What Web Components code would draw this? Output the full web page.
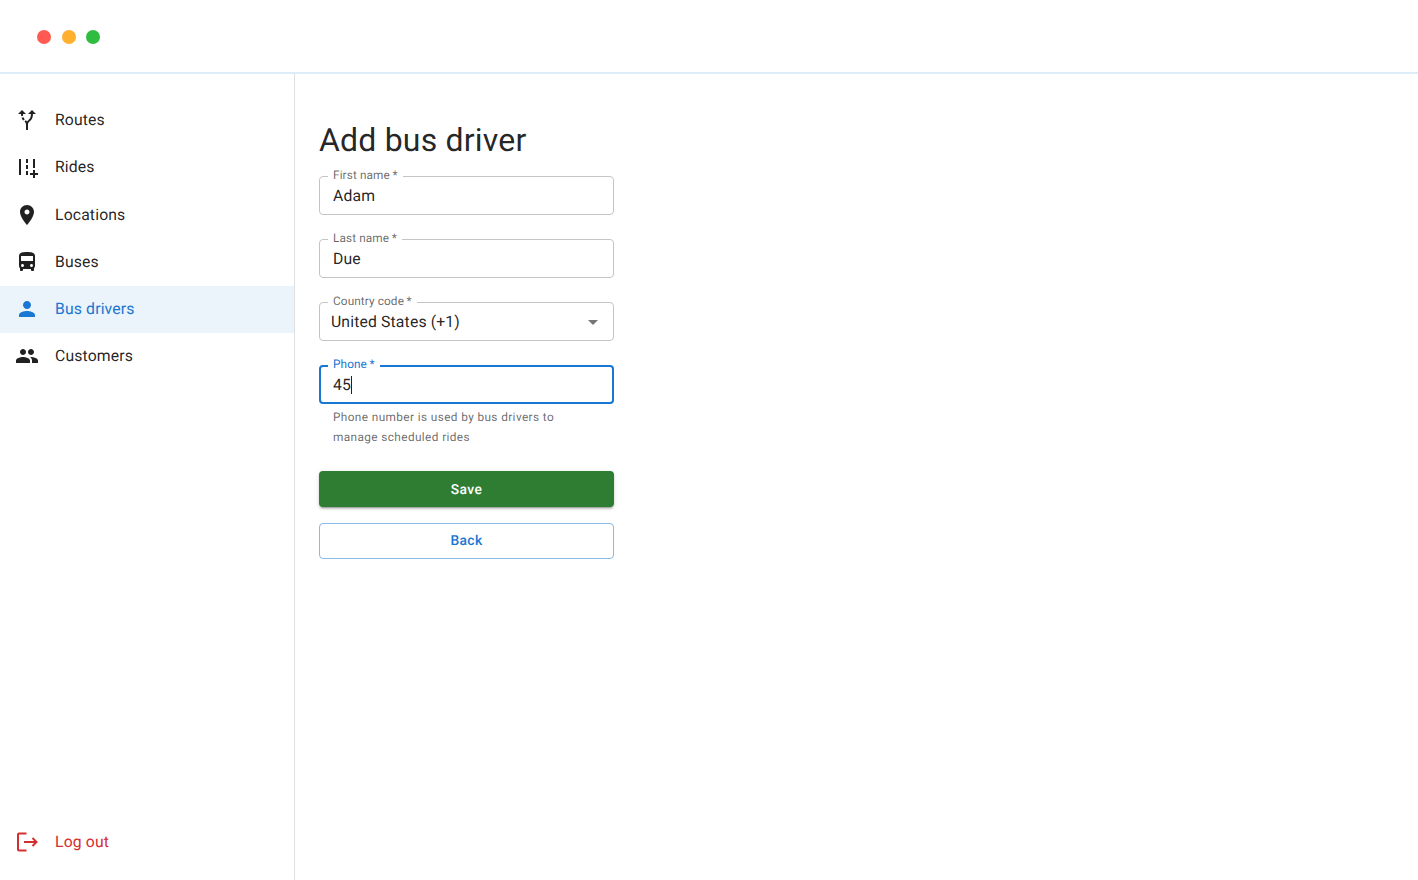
<!DOCTYPE html>
<html lang="en">
<head>
<meta charset="utf-8">
<title>Add bus driver</title>
<style>
  html, body { margin: 0; height: 100%; background: #fff; }
  body { font-family: Roboto, "Liberation Sans", sans-serif; color: rgba(0, 0, 0, 0.87); overflow: hidden; text-rendering: geometricPrecision; }
</style>
</head>
<body>
<app-shell>
  <title-bar slot="top"></title-bar>
  <side-nav slot="side">
    <nav-item icon="route">Routes</nav-item>
    <nav-item icon="road">Rides</nav-item>
    <nav-item icon="place">Locations</nav-item>
    <nav-item icon="bus">Buses</nav-item>
    <nav-item icon="person" selected>Bus drivers</nav-item>
    <nav-item icon="people">Customers</nav-item>
    <nav-item icon="logout" slot="bottom" danger>Log out</nav-item>
  </side-nav>
  <driver-form>
    <text-field label="First name&thinsp;*">Adam</text-field>
    <text-field label="Last name&thinsp;*">Due</text-field>
    <text-field label="Country code&thinsp;*" select>United States (+1)</text-field>
    <text-field label="Phone&thinsp;*" focused>45<span slot="helper">Phone number is used by bus drivers to manage scheduled rides</span></text-field>
    <form-button slot="actions" variant="contained">Save</form-button>
    <form-button slot="actions" variant="outlined">Back</form-button>
  </driver-form>
</app-shell>

<script>
// Material icon paths used by the side navigation
const ICONS = {
  route: '<path d="M9.78 11.16l-1.42 1.42c-.68-.69-1.34-1.58-1.79-2.94l1.94-.49c.32.89.77 1.5 1.27 2.01zM11 6 7 2 3 6h3.02c.02.81.08 1.54.19 2.17l1.94-.49C8.08 7.2 8.03 6.63 8.02 6H11zm10 0-4-4-4 4h2.99c-.1 3.68-1.28 4.75-2.54 5.88-.5.44-1.01.92-1.45 1.55-.34-.49-.73-.88-1.13-1.24L9.46 13.6c.93.85 1.54 1.54 1.54 3.4v5h2v-5c0-2.02.71-2.66 1.79-3.63 1.38-1.24 3.08-2.78 3.2-7.37H21z"/>',
  road: '<path d="M20 18v-3h-2v3h-3v2h3v3h2v-3h3v-2zM18 4h2v9h-2zM4 4h2v16H4zm7 0h2v4h-2zm0 6h2v4h-2zm0 6h2v4h-2z"/>',
  place: '<path d="M12 2C8.13 2 5 5.13 5 9c0 5.25 7 13 7 13s7-7.75 7-13c0-3.87-3.13-7-7-7zm0 9.5c-1.38 0-2.5-1.12-2.5-2.5s1.12-2.5 2.5-2.5 2.5 1.12 2.5 2.5-1.12 2.5-2.5 2.5z"/>',
  bus: '<path d="M4 16c0 .88.39 1.67 1 2.22V20c0 .55.45 1 1 1h1c.55 0 1-.45 1-1v-1h8v1c0 .55.45 1 1 1h1c.55 0 1-.45 1-1v-1.78c.61-.55 1-1.34 1-2.22V6c0-3.5-3.58-4-8-4s-8 .5-8 4v10zm3.5 1c-.83 0-1.5-.67-1.5-1.5S6.67 14 7.5 14s1.5.67 1.5 1.5S8.33 17 7.5 17zm9 0c-.83 0-1.5-.67-1.5-1.5s.67-1.5 1.5-1.5 1.5.67 1.5 1.5-.67 1.5-1.5 1.5zm1.5-6H6V6h12v5z"/>',
  person: '<path d="M12 12c2.21 0 4-1.79 4-4s-1.79-4-4-4-4 1.79-4 4 1.79 4 4 4zm0 2c-2.67 0-8 1.34-8 4v2h16v-2c0-2.66-5.33-4-8-4z"/>',
  people: '<path d="M16 11c1.66 0 2.99-1.34 2.99-3S17.66 5 16 5c-1.66 0-3 1.34-3 3s1.34 3 3 3zm-8 0c1.66 0 2.99-1.34 2.99-3S9.66 5 8 5C6.34 5 5 6.34 5 8s1.34 3 3 3zm0 2c-2.33 0-7 1.17-7 3.5V19h14v-2.5c0-2.33-4.67-3.5-7-3.5zm8 0c-.29 0-.62.02-.97.05 1.16.84 1.97 1.97 1.97 3.45V19h6v-2.5c0-2.33-4.67-3.5-7-3.5z"/>',
  logout: '<path d="M11.5 3.5H4a1 1 0 0 0-1 1v15a1 1 0 0 0 1 1h7.5M9 12h12M17.5 8l4 4-4 4" fill="none" stroke="currentColor" stroke-width="2"/>'
};

class AppShell extends HTMLElement {
  constructor() {
    super();
    this.attachShadow({ mode: "open" });
    this.shadowRoot.innerHTML = `<style>
        :host { display: grid; grid-template-rows: auto 1fr; grid-template-columns: 295px 1fr; height: 100vh; }
        .top { grid-column: 1 / 3; }
      </style>
      <div class="top"><slot name="top"></slot></div>
      <slot name="side"></slot>
      <main><slot></slot></main>`;
  }
}

class TitleBar extends HTMLElement {
  constructor() {
    super();
    this.attachShadow({ mode: "open" });
    this.shadowRoot.innerHTML = `<style>
        :host { display: flex; align-items: center; gap: 10.5px; height: 70px; padding: 2px 0 0 37px; border-bottom: 2px solid #deebf8; box-sizing: content-box; }
        span { width: 14px; height: 14px; border-radius: 50%; }
      </style>
      <span style="background:#ff5a52"></span>
      <span style="background:#ffb02e"></span>
      <span style="background:#2fbd40"></span>`;
  }
}

class SideNav extends HTMLElement {
  constructor() {
    super();
    this.attachShadow({ mode: "open" });
    this.shadowRoot.innerHTML = `<style>
        :host { display: flex; flex-direction: column; justify-content: space-between; padding: 22.5px 0 14px; border-right: 1px solid #e0e0e0; box-sizing: border-box; min-height: 0; }
      </style>
      <div><slot></slot></div>
      <div><slot name="bottom"></slot></div>`;
  }
}

class NavItem extends HTMLElement {
  constructor() {
    super();
    this.attachShadow({ mode: "open" });
    this.shadowRoot.innerHTML = `<style>
        :host { display: flex; align-items: center; gap: 16px; height: 47.25px; padding-left: 15px; font-size: 15.76px; letter-spacing: 0.148px; color: rgba(0, 0, 0, 0.87); }
        :host([selected]) { background: #ebf3fb; color: #1976d2; }
        :host([danger]) { color: #d32f2f; }
        svg { width: 24px; height: 24px; fill: currentColor; flex: none; }
        span { margin-bottom: 1px; }
      </style>
      <svg viewBox="0 0 24 24">${ICONS[this.getAttribute("icon")]}</svg>
      <span><slot></slot></span>`;
  }
}

class DriverForm extends HTMLElement {
  constructor() {
    super();
    this.attachShadow({ mode: "open" });
    this.shadowRoot.innerHTML = `<style>
        :host { display: block; width: 295px; padding: 46px 0 0 24px; }
        h1 { margin: 0 0 16px; font-size: 32px; font-weight: 400; line-height: 40px; letter-spacing: 0.2px; }
        .fields, .actions { display: flex; flex-direction: column; }
        .fields { gap: 24px; }
        .actions { gap: 16px; margin-top: 24px; }
      </style>
      <h1>Add bus driver</h1>
      <div class="fields"><slot></slot></div>
      <div class="actions"><slot name="actions"></slot></div>`;
  }
}

class TextField extends HTMLElement {
  constructor() {
    super();
    this.attachShadow({ mode: "open" });
    const caret = this.hasAttribute("focused") ? '<i class="caret"></i>' : "";
    const arrow = this.hasAttribute("select")
      ? '<svg viewBox="0 0 24 24"><path d="M7 10l5 5 5-5z"/></svg>'
      : "";
    this.shadowRoot.innerHTML = `<style>
        :host { display: block; }
        .box { position: relative; display: flex; align-items: center; justify-content: space-between; height: 39px; padding: 0 14px; box-sizing: border-box; font-size: 15.76px; letter-spacing: 0.148px; }
        :host([select]) .box { padding: 0 9px 0 12px; }
        fieldset { position: absolute; inset: -5px 0 0; margin: 0; padding: 0 8px; border: 1px solid #c4c4c4; border-radius: 4px; pointer-events: none; }
        legend { padding: 0 5.5px 0 5px; height: 11px; font-size: 11.82px; line-height: 9px; letter-spacing: 0.1px; color: rgba(0, 0, 0, 0.6); white-space: nowrap; }
        :host([focused]) fieldset { border: 2px solid #1976d2; padding: 0 7px; }
        :host([focused]) legend { color: #1976d2; }
        .value { display: flex; align-items: center; }
        .caret { width: 1px; height: 18px; background: #222; }
        svg { width: 24px; height: 24px; fill: rgba(0, 0, 0, 0.54); }
        .helper { margin: 2.5px 14px 0; padding-bottom: 0.5px; font-size: 11.82px; line-height: 20px; letter-spacing: 0.39px; color: rgba(0, 0, 0, 0.6); }
      </style>
      <div class="box">
        <fieldset><legend>${this.getAttribute("label")}</legend></fieldset>
        <span class="value"><slot></slot>${caret}</span>
        ${arrow}
      </div>
      ${this.querySelector('[slot="helper"]') ? '<div class="helper"><slot name="helper"></slot></div>' : ""}`;
  }
}

class FormButton extends HTMLElement {
  constructor() {
    super();
    this.attachShadow({ mode: "open" });
    this.shadowRoot.innerHTML = `<style>
        :host { display: flex; align-items: center; justify-content: center; height: 36px; box-sizing: border-box; border-radius: 4px; font-size: 13.8px; font-weight: 500; letter-spacing: 0.39px; }
        :host([variant="contained"]) { padding-top: 1px; background: #2e7d32; color: #fff; box-shadow: 0 3px 1px -2px rgba(0,0,0,.2), 0 2px 2px 0 rgba(0,0,0,.14), 0 1px 5px 0 rgba(0,0,0,.12); }
        :host([variant="outlined"]) { border: 1px solid rgba(25, 118, 210, 0.5); color: #1976d2; }
      </style>
      <slot></slot>`;
  }
}

customElements.define("app-shell", AppShell);
customElements.define("title-bar", TitleBar);
customElements.define("side-nav", SideNav);
customElements.define("nav-item", NavItem);
customElements.define("driver-form", DriverForm);
customElements.define("text-field", TextField);
customElements.define("form-button", FormButton);
</script>
</body>
</html>
